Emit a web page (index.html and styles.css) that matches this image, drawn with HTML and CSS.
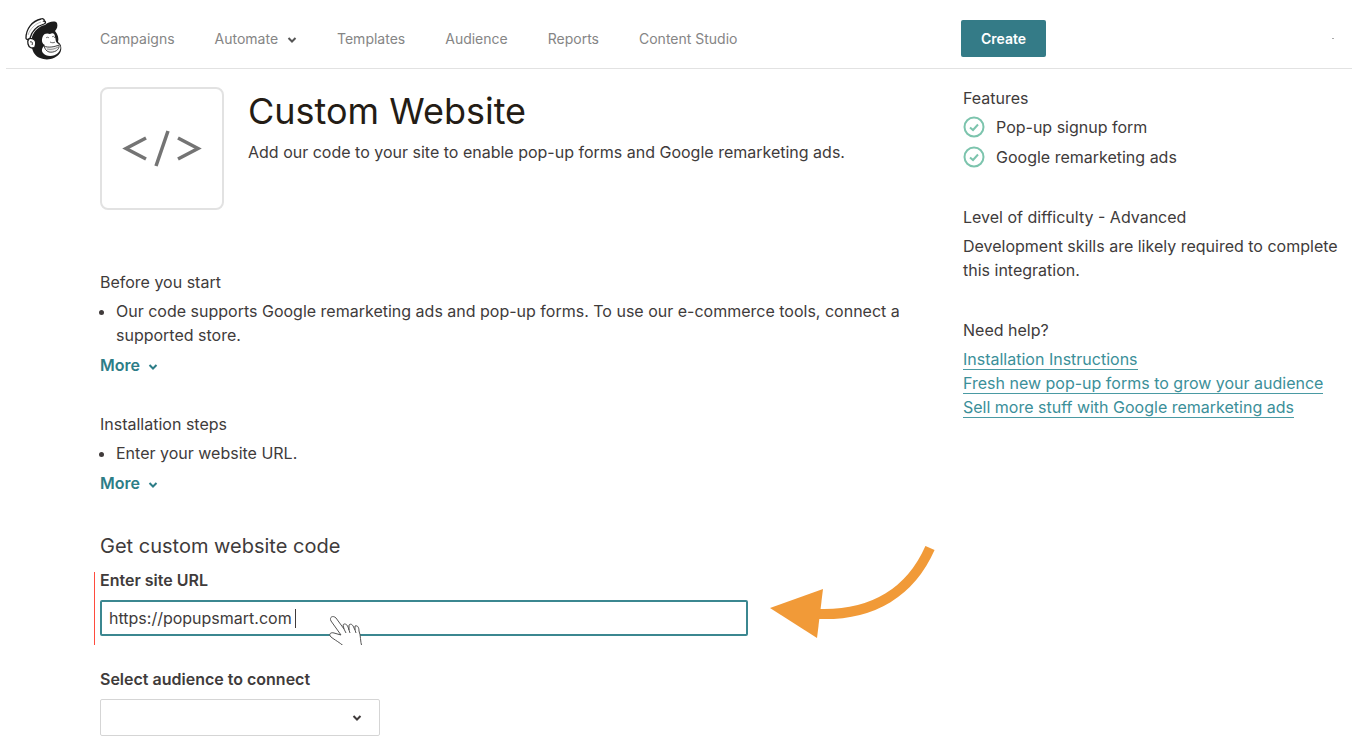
FILE: index.html
```
<!DOCTYPE html>
<html lang="en">

<head>
    <meta charset="UTF-8">
    <meta name="viewport" content="width=device-width, initial-scale=1.0">
    <title>Custom Website | Mailchimp</title>
    <link rel="stylesheet" href="styles.css">
</head>

<body>
    <!-- Top navigation -->
    <header class="topbar">
        <a class="logo" href="#" aria-label="Mailchimp">
            <svg width="40" height="44" viewBox="0 0 40 44">
                <path d="M8 20 C10 14 15 9 21 8 C24 5 31 3 33 6 C34 9 33 12 31 14 C34 18 35 21 34 25 C38 27 38 33 36 36 C32 42 23 44 16 41 C11 39 9 35 8 31 Z" fill="#1c1c1c" />
                <path d="M2 21 C2 12 8 4 17 2 C19 1 21 3 20 4 C22 4 22 6 20 7 C13 9 8 14 6 21 C5 23 2 23 2 21 Z" fill="#fff" stroke="#1c1c1c" stroke-width="1.3" />
                <path d="M4 18 C6 12 11 7 17 5" fill="none" stroke="#999" stroke-width=".7" />
                <path d="M9 22 C5 20 3 23 4 27 C5 31 8 32 11 30 C12 27 12 23 9 22 Z" fill="#fff" stroke="#1c1c1c" stroke-width="1.3" />
                <path d="M6 25 C8 24 9 26 8 28" fill="none" stroke="#1c1c1c" stroke-width="1" />
                <path d="M19 19 C20 16 24 16 26 17 C29 15 31 17 31 20 C32 22 31 24 33 26 C38 28 37 33 34 36 C30 40 22 40 19 36 C17 33 18 31 21 28 C18 27 17 23 19 19 Z" fill="#fff" />
                <path d="M22 21 C23 20 24 20 25 21 M28 20 C29 19 30 19 31 21 M26 25 C28 26 30 26 31 25" fill="none" stroke="#555" stroke-width=".9" />
                <path d="M20 29 C24 31 30 30 35 28 C36 33 30 36 25 35 C22 34 21 32 20 29 Z" fill="#eee" stroke="#333" stroke-width=".9" />
                <path d="M23 32 C27 33 31 32 34 30" fill="none" stroke="#777" stroke-width=".8" />
            </svg>
        </a>
        <nav class="menu">
            <a href="#">Campaigns</a>
            <a href="#">Automate
                <svg class="chevron" width="10" height="8" viewBox="0 0 10 8"><path d="M1.5 2 L5 5.5 L8.5 2" /></svg>
            </a>
            <a href="#">Templates</a>
            <a href="#">Audience</a>
            <a href="#">Reports</a>
            <a href="#">Content Studio</a>
        </nav>
        <div class="actions">
            <button class="create" type="button">Create</button>
            <span class="dot"></span>
        </div>
    </header>

    <div class="page">
        <main class="content">
            <section class="intro">
                <div class="tile">
                    <svg width="80" height="38" viewBox="0 0 80 38">
                        <path d="M24 8 L4 18.5 L24 29 M56 8 L76 18.5 L56 29 M46 1 L34 36" />
                    </svg>
                </div>
                <div>
                    <h1>Custom Website</h1>
                    <p>Add our code to your site to enable pop-up forms and Google remarketing ads.</p>
                </div>
            </section>

            <section class="block">
                <h2>Before you start</h2>
                <ul>
                    <li>Our code supports Google remarketing ads and pop-up forms. To use our e-commerce tools, connect a supported store.</li>
                </ul>
                <button class="more" type="button">More
                    <svg class="chevron" width="10" height="8" viewBox="0 0 10 8"><path d="M1.5 2 L5 5.5 L8.5 2" /></svg>
                </button>
            </section>

            <section class="block">
                <h2>Installation steps</h2>
                <ul>
                    <li>Enter your website URL.</li>
                </ul>
                <button class="more" type="button">More
                    <svg class="chevron" width="10" height="8" viewBox="0 0 10 8"><path d="M1.5 2 L5 5.5 L8.5 2" /></svg>
                </button>
            </section>

            <form class="code-form">
                <h3>Get custom website code</h3>
                <div class="field active">
                    <label for="site-url">Enter site URL</label>
                    <input id="site-url" type="text" value="https://popupsmart.com">
                    <span class="caret"></span>
                    <svg class="hand" width="36" height="30" viewBox="0 0 36 30">
                        <path d="M13 20 L3 6 C1 2 5 0 8 3 L16 14 L15 10 C16 8 19 9 20 12 L21 15 L21 10 C23 8 25 10 26 13 L27 15 L27 11 C30 10 31 13 31 16 C33 21 32 26 34 32 L20 37 C17 30 8 26 3 22 C0 19 3 17 6 18 Z" />
                        <path d="M16 14 L18 18 M21 15 L22 18 M27 15 L28 18" />
                    </svg>
                </div>
                <!-- Arrow pointing at the URL field -->
                <svg class="arrow" width="166" height="94" viewBox="0 0 166 94">
                    <path class="arrow-line" d="M48 68 C104 70 141 45 160 2" />
                    <path class="arrow-head" d="M0 62 L53 43 L47 92 Z" />
                </svg>
                <div class="field audience">
                    <label for="audience">Select audience to connect</label>
                    <div class="select">
                        <select id="audience">
                            <option></option>
                        </select>
                        <svg class="chevron" width="10" height="8" viewBox="0 0 10 8"><path d="M1.5 2 L5 5.5 L8.5 2" /></svg>
                    </div>
                </div>
            </form>
        </main>

        <aside class="sidebar">
            <section>
                <h2>Features</h2>
                <ul class="features">
                    <li>
                        <svg width="22" height="22" viewBox="0 0 22 22"><circle cx="11" cy="11" r="9.5" /><path d="M7 11.5 L10 14 L15 8.5" /></svg>
                        Pop-up signup form
                    </li>
                    <li>
                        <svg width="22" height="22" viewBox="0 0 22 22"><circle cx="11" cy="11" r="9.5" /><path d="M7 11.5 L10 14 L15 8.5" /></svg>
                        Google remarketing ads
                    </li>
                </ul>
            </section>
            <section>
                <h2>Level of difficulty - Advanced</h2>
                <p>Development skills are likely required to complete this integration.</p>
            </section>
            <section>
                <h2>Need help?</h2>
                <ul class="links">
                    <li><a href="#">Installation Instructions</a></li>
                    <li><a href="#">Fresh new pop-up forms to grow your audience</a></li>
                    <li><a href="#">Sell more stuff with Google remarketing ads</a></li>
                </ul>
            </section>
        </aside>
    </div>
</body>

</html>
```

FILE: styles.css
```
* {
    box-sizing: border-box;
}

body {
    margin: 0;
    background: #fff;
    color: #403b3b;
    font-family: Inter, "Liberation Sans", Arial, sans-serif;
    font-size: 16px;
    line-height: 24px;
}

h1, h2, h3, p, ul {
    margin: 0;
    padding: 0;
    font-weight: 400;
}

button, input, select {
    font: inherit;
}

.chevron {
    fill: none;
    stroke: currentColor;
    stroke-width: 2;
}

/* Top navigation */
.topbar {
    display: flex;
    align-items: center;
    height: 69px;
    margin-left: 6px;
    padding: 9px 18px 0;
    border-bottom: 1px solid #e2e2e2;
}

.logo {
    display: flex;
    width: 76px;
}

.menu {
    display: flex;
    flex: 1;
    gap: 40px;
    font-size: 14px;
}

.menu a {
    color: #858585;
    text-decoration: none;
    white-space: nowrap;
}

.menu .chevron {
    margin-left: 5px;
    color: #555;
}

.actions {
    display: flex;
    align-items: center;
    justify-content: space-between;
    width: 373px;
}

.create {
    width: 85px;
    height: 37px;
    padding: 0;
    border: 0;
    border-radius: 2px;
    background: #347b87;
    color: #fff;
    font-size: 14px;
    font-weight: 600;
}

.dot {
    width: 2px;
    height: 1px;
    background: #aaa;
}

/* Page body */
.page {
    display: flex;
    padding-left: 100px;
}

.content {
    flex: 1;
    padding-top: 18px;
}

.intro {
    display: flex;
    gap: 24px;
    margin-bottom: 60px;
}

.intro h1 {
    color: #241c15;
    font-size: 36px;
    line-height: 48px;
    margin-bottom: 5px;
}

.tile {
    display: flex;
    align-items: center;
    justify-content: center;
    width: 124px;
    height: 123px;
    border: 2px solid #e2e2e2;
    border-radius: 8px;
}

.tile path {
    fill: none;
    stroke: #747474;
    stroke-width: 3.5;
}

.block {
    margin-bottom: 35px;
}

.block h2,
.sidebar h2 {
    font-size: 16px;
    line-height: 24px;
}

.block h2 {
    margin-bottom: 5px;
}

.block ul {
    max-width: 820px;
    padding-left: 16px;
}

.more {
    display: block;
    margin-top: 6px;
    padding: 0;
    border: 0;
    background: none;
    color: #2d7d87;
    font-weight: 600;
}

.more .chevron {
    margin-left: 4px;
}

/* Code form */
.code-form {
    position: relative;
}

.code-form h3 {
    margin-bottom: 10px;
    font-size: 20px;
    line-height: 32px;
}

.field label {
    display: block;
    margin-bottom: 12px;
    font-weight: 600;
    line-height: 16px;
}

.active {
    position: relative;
    width: 654px;
    margin-left: -6px;
    padding: 0 0 9px 5px;
    border-left: 1px solid #ff4b3e;
}

.active input {
    display: block;
    width: 100%;
    height: 36px;
    padding: 0 7px;
    border: 2px solid #3b8790;
    border-radius: 2px;
    background: #fff;
    color: #403b3b;
    outline: 0;
}

.caret {
    position: absolute;
    top: 37px;
    left: 200px;
    width: 1px;
    height: 19px;
    background: #403b3b;
}

.hand {
    position: absolute;
    top: 43px;
    left: 233px;
    fill: #fff;
    stroke: #555;
}

.arrow {
    position: absolute;
    top: 16px;
    left: 670px;
}

.arrow-line {
    fill: none;
    stroke: #f19a38;
    stroke-width: 10;
}

.arrow-head {
    fill: #f19a38;
}

.audience {
    margin-top: 26px;
}

.select {
    position: relative;
    width: 280px;
}

.select select {
    display: block;
    width: 100%;
    height: 37px;
    border: 1px solid #d5d5d5;
    border-radius: 2px;
    background: #fff;
    appearance: none;
}

.select .chevron {
    position: absolute;
    top: 15px;
    right: 18px;
}

/* Right column */
.sidebar {
    width: 389px;
    padding-top: 17px;
}

.sidebar section {
    margin-bottom: 36px;
}

.sidebar h2 {
    margin-bottom: 5px;
}

.sidebar ul {
    list-style: none;
}

.features li {
    display: flex;
    align-items: center;
    gap: 11px;
    height: 24px;
}

.features li + li {
    margin-top: 6px;
}

.features svg {
    fill: none;
    stroke: #7cc4ad;
    stroke-width: 2;
}

.links a {
    border-bottom: 1px solid #4a9aa3;
    color: #3b8f99;
    text-decoration: none;
}
```
